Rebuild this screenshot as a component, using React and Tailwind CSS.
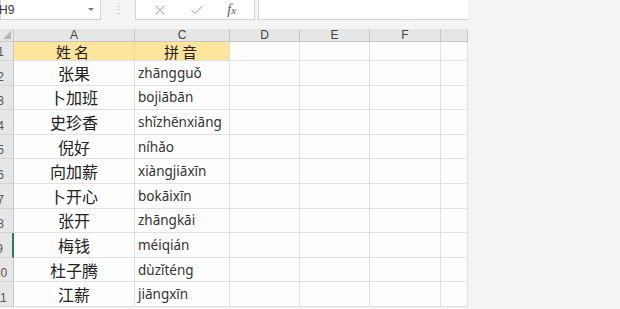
const cols = [
   { key: "A", w: "w-[121px]" },
   { key: "C", w: "w-[95px]" },
   { key: "D", w: "w-[70px]" },
   { key: "E", w: "w-[70px]" },
   { key: "F", w: "w-[71px]" },
   { key: "", w: "w-[27px]" },
];

const people = [
   ["张果", "zhāngguǒ"],
   ["卜加班", "bojiābān"],
   ["史珍香", "shǐzhēnxiāng"],
   ["倪好", "níhǎo"],
   ["向加薪", "xiàngjiāxīn"],
   ["卜开心", "bokāixīn"],
   ["张开", "zhāngkāi"],
   ["梅钱", "méiqián"],
   ["杜子腾", "dùzǐténg"],
   ["江薪", "jiāngxīn"],
];

const cjk = { fontFamily: '"Noto Sans CJK SC", "Noto Sans", sans-serif' };

function RowNum({ n, active, h }) {
   return (
      <div
         className={`relative w-[14px] ${h} shrink-0 overflow-hidden bg-[#e6e6e6] border-b border-[#d4d4d4] ${
            active ? "border-r-2 border-r-[#2e7d4f]" : "border-r border-r-[#c8c8c8]"
         }`}>
         <div className="absolute right-0 bottom-0 w-[25px] text-center text-[12px] leading-[16px] text-[#555]">{n}</div>
      </div>
   );
}

function Cell({ w, h, className = "", children }) {
   return (
      <div className={`${w} ${h} shrink-0 border-r border-b border-[#e1e1e1] flex items-center overflow-hidden ${className}`}>
         {children}
      </div>
   );
}

export default function App() {
   return (
      <div className="w-[620px] h-[309px] overflow-hidden bg-[#f4f4f4] flex" style={{ fontFamily: '"Liberation Sans", Arial, sans-serif' }}>
         <div className="w-[468px] shrink-0 flex flex-col">
            {/* Formula bar */}
            <div className="h-[29px] flex items-start bg-[#f4f4f4]">
               <div className="w-[101px] h-[20px] bg-white border border-[#d4d4d4] border-t-0 flex items-center justify-between pr-[6px]">
                  <span className="text-[12px] text-[#333] -ml-[2px]">H9</span>
                  <span className="w-0 h-0 border-l-[3px] border-r-[3px] border-t-[3px] border-l-transparent border-r-transparent border-t-[#777]" />
               </div>
               <div className="w-[34px] h-[20px] flex items-center justify-center text-[#aaa] text-[11px]">⋮</div>
               <div className="w-[120px] h-[20px] bg-white border border-[#d4d4d4] border-t-0 flex items-center justify-around px-[6px]">
                  <svg width="12" height="12" viewBox="0 0 12 12" stroke="#bdbdbd" strokeWidth="1.1">
                     <path d="M1.5 1.5 L10.5 10.5 M10.5 1.5 L1.5 10.5" />
                  </svg>
                  <svg width="14" height="12" viewBox="0 0 14 12" fill="none" stroke="#bdbdbd" strokeWidth="1.2">
                     <path d="M1.5 6 L5 9.5 L12.5 2" />
                  </svg>
                  <span className="text-[14px] italic text-[#555]" style={{ fontFamily: '"Liberation Serif", serif' }}>
                     f<span className="text-[11px]">x</span>
                  </span>
               </div>
               <div className="ml-[3px] flex-1 h-[20px] bg-white border border-[#d4d4d4] border-t-0 border-r-0" />
            </div>

            {/* Column headers */}
            <div className="flex h-[13px] bg-[#e6e6e6] border-b border-[#c6c6c6]">
               <div className="w-[14px] shrink-0 border-r border-[#c8c8c8] relative overflow-hidden">
                  <span className="absolute right-[2px] bottom-[2px] w-0 h-0" style={{ borderBottom: "8px solid #b5b5b5", borderLeft: "8px solid transparent" }} />
               </div>
               {cols.map((c, i) => (
                  <div key={i} className={`${c.w} shrink-0 border-r border-[#c8c8c8] text-center text-[12px] leading-[12px] text-[#444]`}>
                     {c.key}
                  </div>
               ))}
            </div>

            {/* Row 1 */}
            <div className="flex">
               <RowNum n={1} h="h-[19px]" />
               <Cell w="w-[121px]" h="h-[19px]" className="justify-center bg-[#fee59b] border-r-[#f2d98f] text-[15px] leading-[15px] text-[#222]">
                  <span style={cjk} className="tracking-[3px]">姓名</span>
               </Cell>
               <Cell w="w-[95px]" h="h-[19px]" className="justify-center bg-[#fee59b] text-[15px] leading-[15px] text-[#222]">
                  <span style={cjk} className="tracking-[3px]">拼音</span>
               </Cell>
               {cols.slice(2).map((c, i) => (
                  <Cell key={i} w={c.w} h="h-[19px]" className="bg-[#fdfdfd]" />
               ))}
            </div>

            {/* Data rows */}
            {people.map(([name, py], r) => (
               <div key={r} className="flex">
                  <RowNum n={r + 2} h="h-[24.6px]" active={r + 2 === 9} />
                  <Cell w="w-[121px]" h="h-[24.6px]" className="justify-center bg-[#fdfdfd] text-[16px] leading-[18px] text-[#222]">
                     <span style={cjk}>{name}</span>
                  </Cell>
                  <Cell w="w-[95px]" h="h-[24.6px]" className="pl-[3px] bg-[#fdfdfd] text-[13.5px] leading-[18px] text-[#333]">
                     <span style={{ fontFamily: '"Noto Sans", "Open Sans", sans-serif' }}>{py}</span>
                  </Cell>
                  {cols.slice(2).map((c, i) => (
                     <Cell key={i} w={c.w} h="h-[24.6px]" className="bg-[#fdfdfd]" />
                  ))}
               </div>
            ))}
         </div>
      </div>
   );
}
